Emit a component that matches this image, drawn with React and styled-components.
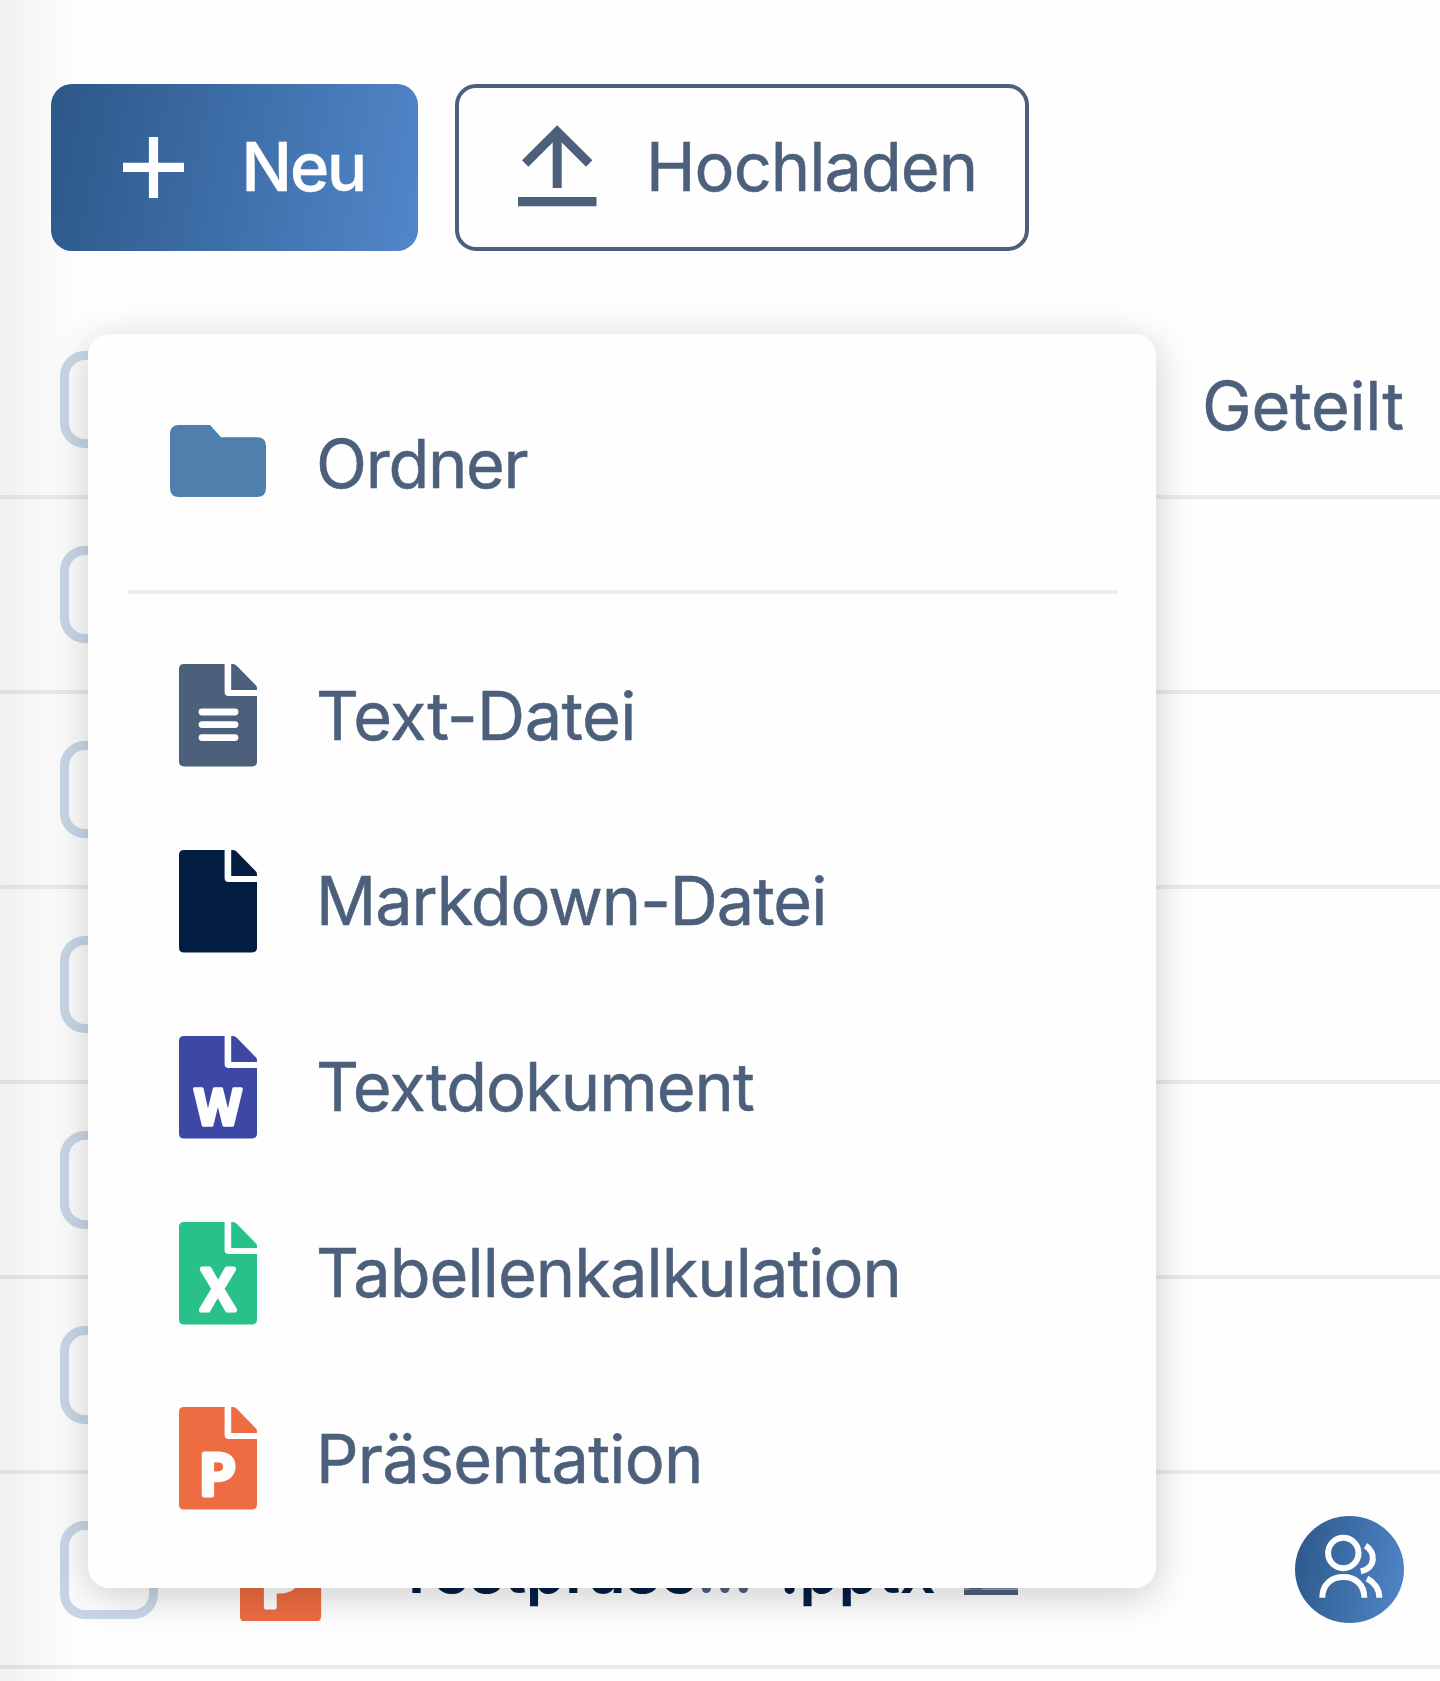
import React from 'react';
import styled, { createGlobalStyle } from 'styled-components';

const GlobalStyle = createGlobalStyle`
  * { box-sizing: border-box; }
  body {
    margin: 0;
    background: #fefefe;
    font-family: Inter, "Liberation Sans", sans-serif;
    font-size: 66.7px;
    line-height: 80px;
    color: #4d607b;
  }
`;

const Page = styled.div`
  position: relative;
  width: 1440px;
  height: 1681px;
  overflow: hidden;
  background: #fefefe;
`;

const EdgeShade = styled.div`
  position: absolute;
  inset: 0 auto 0 0;
  width: 104px;
  pointer-events: none;
  background: linear-gradient(to right, rgba(0, 0, 0, 0.056), rgba(0, 0, 0, 0.018) 45%, rgba(0, 0, 0, 0.005) 72%, transparent);
`;

const Toolbar = styled.div`
  position: relative;
  z-index: 1;
  display: flex;
  gap: 37px;
  height: 304px;
  padding: 83.5px 0 0 51px;
`;

const Button = styled.button`
  display: flex;
  align-items: center;
  height: 167px;
  width: ${(p) => p.$width}px;
  padding: 0 0 0 ${(p) => p.$pad}px;
  gap: ${(p) => p.$gap}px;
  border: ${(p) => (p.$primary ? 'none' : '4.2px solid #4d607b')};
  border-radius: 21px;
  background: ${(p) => (p.$primary ? 'linear-gradient(101deg, #2d598a 3%, #5085c8 97%)' : '#fefefe')};
  color: ${(p) => (p.$primary ? '#fff' : '#4d607b')};
  font: inherit;
  font-weight: ${(p) => (p.$primary ? 500 : 400)};
  letter-spacing: ${(p) => p.$spacing || 0}px;
  -webkit-text-stroke: 0.5px currentColor;
  white-space: nowrap;
  svg { flex: none; display: block; }
`;

const Row = styled.div`
  display: flex;
  align-items: center;
  height: 195.07px;
  padding-left: 60px;
  border-bottom: 4.5px solid #ebebec;
`;

const Checkbox = styled.div`
  flex: none;
  width: 98px;
  height: 97.5px;
  border: 9.4px solid #c9d8e8;
  border-radius: 25px;
`;

const HeaderLabel = styled.div`
  margin-left: 1044px;
  padding-top: 12.6px;
  letter-spacing: -0.3px;
  -webkit-text-stroke: 0.5px currentColor;
`;

const RowIcon = styled.div`
  flex: none;
  margin: 0 74px 0 82.4px;
  padding-bottom: 3.5px;
  svg { display: block; }
`;

const FileName = styled.div`
  display: flex;
  flex: none;
  width: 568.6px;
  color: #041e42;
  font-size: 63.5px;
  font-weight: 600;
  letter-spacing: -0.4px;
  white-space: pre;
`;

const Dots = styled.span`
  color: #4d607b;
  font-weight: 500;
  letter-spacing: -0.8px;
  margin-right: 27.2px;
`;

const SharedBadge = styled.div`
  display: grid;
  place-items: center;
  flex: none;
  margin-left: 277px;
  width: 109px;
  height: 107px;
  border-radius: 50%;
  background: linear-gradient(101deg, #2d598a 3%, #5085c8 97%);
  svg { display: block; }
`;

const Menu = styled.div`
  position: absolute;
  z-index: 2;
  left: 88px;
  top: 334px;
  width: 1068.4px;
  height: 1253.7px;
  padding-top: 36.3px;
  border-radius: 21px;
  background: #fefefe;
  box-shadow: 0 8px 42px rgba(0, 0, 0, 0.2);
`;

const MenuItem = styled.div`
  display: flex;
  align-items: center;
  height: 185.75px;
  padding-top: 2px;
  letter-spacing: ${(p) => p.$spacing || 0}px;
  -webkit-text-stroke: 0.5px currentColor;
`;

const IconSlot = styled.div`
  display: flex;
  justify-content: center;
  flex: none;
  width: 98px;
  margin: 0 49px 0 81px;
  padding-bottom: ${(p) => p.$lift || 0}px;
  svg { display: block; overflow: visible; }
`;

const Divider = styled.div`
  height: 4.5px;
  margin: 33.7px 38.7px 27.4px;
  border-radius: 2px;
  background: #ebebeb;
`;

const PlusIcon = () => (
  <svg width="61" height="61" viewBox="0 0 61 61">
    <path d="M30.5 0V61M0 30.3H61" stroke="#fff" strokeWidth="9.2" />
  </svg>
);

const UploadIcon = () => (
  <svg width="79" height="84" viewBox="0 0 79 84" fill="none" stroke="#4d607b">
    <path d="M39.2 8V63" strokeWidth="9" />
    <path d="M7.2 38.5L39.2 6.5L71.2 38.5" strokeWidth="9" />
    <path d="M0 76.6H78.5" strokeWidth="9.4" />
  </svg>
);

const FolderIcon = () => (
  <svg width="97" height="72" viewBox="0 0 97 72" fill="#4f80ad">
    <path d="M9 0H40L51 12.3H87Q96 12.3 96 21V63Q96 72 87 72H9Q0 72 0 63V9Q0 0 9 0Z" />
  </svg>
);

const LETTERS = {
  W: { x: 39, y: 89.4, size: 50.5, width: 0.95, weight: 700, stroke: 3.6 },
  X: { x: 39, y: 88.2, size: 58.5, width: 0.92, weight: 600, stroke: 5.2 },
  P: { x: 38.4, y: 88, size: 58, width: 1.04, weight: 600, stroke: 5 },
};

const FileIcon = ({ color, letter, lines, scale = 1 }) => {
  const l = LETTERS[letter];
  return (
    <svg width={78 * scale} height={102.4 * scale} viewBox="0 0 78 102.4">
      <path
        fill={color}
        d="M5 0H45.6V28Q45.6 32 49.6 32H78V97.4Q78 102.4 73 102.4H5Q0 102.4 0 97.4V5Q0 0 5 0Z"
      />
      <path fill={color} d="M52.2 0H54Q56 0 58 2L77 21.5Q78 22.6 78 24.5V26H52.2Z" />
      {lines && (
        <path d="M23 48H56M23 60.6H56M23 73.6H56" stroke="#fefefe" strokeWidth="6.8" strokeLinecap="round" />
      )}
      {l && (
        <text
          transform={`translate(${l.x} ${l.y}) scale(${l.width} 1)`}
          textAnchor="middle"
          fontFamily="'Open Sans', sans-serif"
          fontWeight={l.weight}
          fontSize={l.size}
          letterSpacing="0"
          fill="#fefefe"
          stroke="#fefefe"
          strokeWidth={l.stroke}
          strokeLinejoin="round"
        >
          {letter}
        </text>
      )}
    </svg>
  );
};

const PeopleIcon = () => (
  <svg width="109" height="107" viewBox="0 0 109 107" fill="none" stroke="#fff" strokeWidth="6">
    <circle cx="48.3" cy="37" r="15.2" />
    <path d="M27.3 81.7C27.3 68 37 61 48.3 61S69.3 68 69.3 81.7" />
    <path d="M70.5 29.6C81 36 81 52.5 65.8 55.2" />
    <path d="M72 62.5C79 66 84.3 73 84.3 81.7" />
  </svg>
);

const DeviceIcon = () => (
  <svg width="54" height="50" viewBox="0 0 54 50" fill="none">
    <path d="M0 47.2H54" stroke="#4d607b" strokeWidth="5.6" />
    <path d="M0 42H54" stroke="#8790a1" strokeWidth="5" />
    <path d="M4 44.5L18 38V44.5Z" fill="#4d607b" />
  </svg>
);

const DeviceSlot = styled.div`
  flex: none;
  width: 54px;
  svg { display: block; }
`;

const documents = [
  { label: 'Text-Datei', color: '#4d607b', lines: true, spacing: -0.6 },
  { label: 'Markdown-Datei', color: '#041e42', spacing: -1.05 },
  { label: 'Textdokument', color: '#3d48a4', letter: 'W', spacing: -0.97 },
  { label: 'Tabellenkalkulation', color: '#28c18a', letter: 'X', spacing: -0.95 },
  { label: 'Präsentation', color: '#ed6c42', letter: 'P', spacing: -0.75 },
];

export default function App() {
  return (
    <>
      <GlobalStyle />
      <Page>
        <Toolbar>
          <Button $primary $width={367} $pad={72} $gap={57.5} $spacing={-2}>
            <PlusIcon />
            Neu
          </Button>
          <Button $width={573.6} $pad={59} $gap={49} $spacing={-0.95}>
            <UploadIcon />
            Hochladen
          </Button>
        </Toolbar>
        <Row>
          <Checkbox />
          <HeaderLabel>Geteilt</HeaderLabel>
        </Row>
        {[1, 2, 3, 4, 5].map((n) => (
          <Row key={n}>
            <Checkbox />
          </Row>
        ))}
        <Row>
          <Checkbox />
          <RowIcon>
            <FileIcon color="#ed6c42" letter="P" scale={1.04} />
          </RowIcon>
          <FileName>
            Testpräse<Dots>...</Dots>.pptx
          </FileName>
          <DeviceSlot>
            <DeviceIcon />
          </DeviceSlot>
          <SharedBadge>
            <PeopleIcon />
          </SharedBadge>
        </Row>
        <EdgeShade />
        <Menu>
          <MenuItem $spacing={-1.3}>
            <IconSlot $lift={6.4}>
              <FolderIcon />
            </IconSlot>
            Ordner
          </MenuItem>
          <Divider />
          {documents.map((d) => (
            <MenuItem key={d.label} $spacing={d.spacing}>
              <IconSlot>
                <FileIcon color={d.color} letter={d.letter} lines={d.lines} />
              </IconSlot>
              {d.label}
            </MenuItem>
          ))}
        </Menu>
      </Page>
    </>
  );
}
